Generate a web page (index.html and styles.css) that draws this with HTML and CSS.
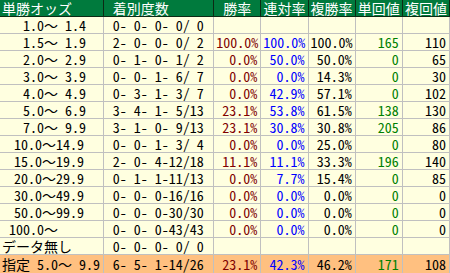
FILE: index.html
```html
<!DOCTYPE html>
<html lang="ja">
<head>
<meta charset="utf-8">
<title>単勝オッズ</title>
<link rel="stylesheet" href="styles.css">
</head>
<body>
<table class="stats">
  <colgroup>
    <col class="c-odds"><col class="c-rec"><col class="c-p"><col class="c-p"><col class="c-p"><col class="c-p"><col class="c-p">
  </colgroup>
  <thead>
    <tr>
      <th class="l">単勝オッズ</th>
      <th class="l"> 着別度数</th>
      <th>勝率</th>
      <th>連対率</th>
      <th>複勝率</th>
      <th>単回値</th>
      <th>複回値</th>
    </tr>
  </thead>
  <tbody>
    <tr><td class="l">   1.0～ 1.4</td><td class="l"> 0- 0- 0- 0/ 0</td><td></td><td></td><td></td><td></td><td></td></tr>
    <tr><td class="l">   1.5～ 1.9</td><td class="l"> 2- 0- 0- 0/ 2</td><td class="win">100.0%</td><td class="ren">100.0%</td><td>100.0%</td><td class="tan">165</td><td>110</td></tr>
    <tr><td class="l">   2.0～ 2.9</td><td class="l"> 0- 1- 0- 1/ 2</td><td class="win">0.0%</td><td class="ren">50.0%</td><td>50.0%</td><td class="tan">0</td><td>65</td></tr>
    <tr><td class="l">   3.0～ 3.9</td><td class="l"> 0- 0- 1- 6/ 7</td><td class="win">0.0%</td><td class="ren">0.0%</td><td>14.3%</td><td class="tan">0</td><td>30</td></tr>
    <tr><td class="l">   4.0～ 4.9</td><td class="l"> 0- 3- 1- 3/ 7</td><td class="win">0.0%</td><td class="ren">42.9%</td><td>57.1%</td><td class="tan">0</td><td>102</td></tr>
    <tr><td class="l">   5.0～ 6.9</td><td class="l"> 3- 4- 1- 5/13</td><td class="win">23.1%</td><td class="ren">53.8%</td><td>61.5%</td><td class="tan">138</td><td>130</td></tr>
    <tr><td class="l">   7.0～ 9.9</td><td class="l"> 3- 1- 0- 9/13</td><td class="win">23.1%</td><td class="ren">30.8%</td><td>30.8%</td><td class="tan">205</td><td>86</td></tr>
    <tr><td class="l l2">  10.0～14.9</td><td class="l"> 0- 0- 1- 3/ 4</td><td class="win">0.0%</td><td class="ren">0.0%</td><td>25.0%</td><td class="tan">0</td><td>80</td></tr>
    <tr><td class="l l2">  15.0～19.9</td><td class="l"> 2- 0- 4-12/18</td><td class="win">11.1%</td><td class="ren">11.1%</td><td>33.3%</td><td class="tan">196</td><td>140</td></tr>
    <tr><td class="l l2">  20.0～29.9</td><td class="l"> 0- 1- 1-11/13</td><td class="win">0.0%</td><td class="ren">7.7%</td><td>15.4%</td><td class="tan">0</td><td>85</td></tr>
    <tr><td class="l l2">  30.0～49.9</td><td class="l"> 0- 0- 0-16/16</td><td class="win">0.0%</td><td class="ren">0.0%</td><td>0.0%</td><td class="tan">0</td><td>0</td></tr>
    <tr><td class="l l2">  50.0～99.9</td><td class="l"> 0- 0- 0-30/30</td><td class="win">0.0%</td><td class="ren">0.0%</td><td>0.0%</td><td class="tan">0</td><td>0</td></tr>
    <tr><td class="l"> 100.0～</td><td class="l"> 0- 0- 0-43/43</td><td class="win">0.0%</td><td class="ren">0.0%</td><td>0.0%</td><td class="tan">0</td><td>0</td></tr>
    <tr><td class="l">データ無し</td><td class="l"> 0- 0- 0- 0/ 0</td><td></td><td></td><td></td><td></td><td></td></tr>
    <tr class="sel"><td class="l">指定 5.0～ 9.9</td><td class="l"> 6- 5- 1-14/26</td><td class="win">23.1%</td><td class="ren">42.3%</td><td>46.2%</td><td class="tan">171</td><td>108</td></tr>
  </tbody>
</table>
</body>
</html>
```
FILE: styles.css
```css
html, body {
  margin: 0;
  padding: 0;
  background: #ffffff;
}
.stats {
  border-collapse: collapse;
  table-layout: fixed;
  width: 450px;
  font-family: "Noto Sans Mono CJK JP", "DejaVu Sans Mono", "Noto Sans CJK JP", monospace;
  font-size: 14px;
  background: #ffffe0;
  color: #000;
}
.c-odds { width: 103px; }
.c-rec { width: 110px; }
.c-p { width: 47px; }
.stats th {
  background: #007a3d;
  color: #fff;
  font-weight: normal;
  height: 16px;
  line-height: 16px;
  padding: 0;
  text-align: center;
  white-space: pre;
  border-right: 1px solid #0d2a14;
  border-bottom: 1px solid #0d2a14;
}
.stats td {
  height: 16px;
  line-height: 16px;
  padding: 0 3px 0 2px;
  text-align: right;
  white-space: pre;
  border-right: 1px solid #c0c0c0;
  border-bottom: 1px solid #c0c0c0;
  overflow: hidden;
}
.stats th.l, .stats td.l {
  text-align: left;
  padding-left: 2px;
}
.stats td.l2 {
  padding-left: 0;
}
.win { color: #800000; }
.ren { color: #0000ff; }
.tan { color: #008000; }
.sel td {
  background: #ffc080;
  height: 18px;
  border-bottom: none;
}
```
